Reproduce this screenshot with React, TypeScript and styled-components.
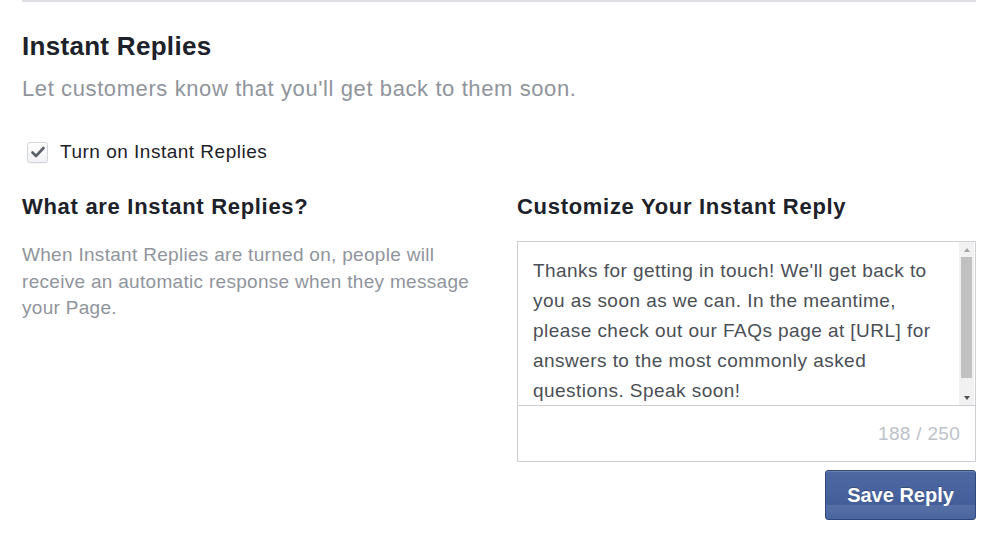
import { FC } from 'react'
import styled, { createGlobalStyle } from 'styled-components'

const GlobalStyle = createGlobalStyle`
	body {
		margin: 0;
		background: #ffffff;
		font-family: 'Liberation Sans', Arial, Helvetica, sans-serif;
	}
`

const Page = styled.div`
	margin: 0 24px 0 22px;
	border-top: 2px solid #dddfe2;
	padding-top: 29px;
`

const Title = styled.h1`
	margin: 0;
	font-size: 26px;
	line-height: 30px;
	letter-spacing: 0.3px;
	font-weight: bold;
	color: #1d2129;
`

const Subtitle = styled.p`
	margin: 13px 0 0;
	font-size: 22px;
	line-height: 30px;
	letter-spacing: 0.6px;
	color: #90949c;
`

const CheckRow = styled.label`
	display: flex;
	align-items: center;
	gap: 12px;
	margin: 36px 0 0 5px;
	font-size: 19px;
	line-height: 24px;
	letter-spacing: 0.5px;
	color: #1d2129;
`

const CheckBox = styled.span`
	display: flex;
	align-items: center;
	justify-content: center;
	width: 19px;
	height: 19px;
	border: 1px solid #d3d6db;
	border-radius: 3px;
	background: linear-gradient(#ffffff, #f1f2f4);
	box-shadow: 0 1px 1px rgba(0, 0, 0, 0.05);
`

const Columns = styled.div`
	display: grid;
	grid-template-columns: 1fr 1fr;
	column-gap: 36px;
	margin-top: 30px;
`

const Column = styled.div`
	display: flex;
	flex-direction: column;
`

const Heading = styled.h2`
	margin: 0;
	font-size: 22px;
	line-height: 26px;
	letter-spacing: 0.7px;
	font-weight: bold;
	color: #1d2129;
`

const Body = styled.p`
	margin: 22px 0 0;
	font-size: 19px;
	line-height: 26.5px;
	letter-spacing: 0.3px;
	color: #90949c;
`

const ReplyBox = styled.div`
	margin-top: 21px;
	border: 1px solid #ccd0d5;
	display: flex;
	flex-direction: column;
`

const TextRow = styled.div`
	display: flex;
	height: 163px;
	border-bottom: 1px solid #ccd0d5;
`

const ReplyText = styled.textarea`
	flex: 1;
	display: block;
	box-sizing: border-box;
	height: 100%;
	margin: 0;
	padding: 14px 5px 0 15px;
	border: 0;
	resize: none;
	outline: none;
	overflow: hidden;
	font-family: 'Liberation Sans', Arial, Helvetica, sans-serif;
	font-size: 19px;
	line-height: 30px;
	letter-spacing: 0.45px;
	color: #4b4f56;
	background: #ffffff;
`

const ScrollBar = styled.div`
	width: 15px;
	margin-right: 1px;
	display: flex;
	flex-direction: column;
	background: #f1f1f1;
`

const ScrollArrow = styled.div<{ $down?: boolean; $color: string }>`
	height: 15px;
	display: flex;
	align-items: center;
	justify-content: center;

	&::before {
		content: '';
		width: 0;
		height: 0;
		border-left: 3.5px solid transparent;
		border-right: 3.5px solid transparent;
		${({ $down, $color }) =>
			$down ? `border-top: 4px solid ${$color};` : `border-bottom: 4px solid ${$color};`}
	}
`

const ScrollTrack = styled.div`
	flex: 1;
	padding: 0 2px;
`

const ScrollThumb = styled.div`
	height: 121px;
	background: #c1c1c1;
`

const Counter = styled.div`
	height: 55px;
	display: flex;
	align-items: center;
	justify-content: flex-end;
	padding-right: 15px;
	font-size: 19px;
	letter-spacing: 0.3px;
	color: #bec2c9;
`

const Actions = styled.div`
	display: flex;
	justify-content: flex-end;
	margin-top: 8px;
`

const SaveButton = styled.button`
	width: 151px;
	height: 50px;
	border: 1px solid #2f477a;
	border-radius: 3px;
	background: linear-gradient(#4e69a2 0%, #435e99 70%, #5670a6 72%, #4a64a0 100%);
	box-shadow: inset 0 1px 0 rgba(255, 255, 255, 0.15);
	color: #ffffff;
	font-family: 'Liberation Sans', Arial, Helvetica, sans-serif;
	font-size: 20px;
	font-weight: bold;
	text-shadow: 0 -1px 0 rgba(0, 0, 0, 0.25);
	cursor: pointer;
`

const CheckMark: FC = () => (
	<svg width="14" height="12" viewBox="0 0 14 12">
		<path d="M1.5 6.5 L5 10 L12.5 2" fill="none" stroke="#5d6169" strokeWidth="2.6" strokeLinecap="round" strokeLinejoin="round" />
	</svg>
)

const replyText =
	"Thanks for getting in touch! We'll get back to you as soon as we can. In the meantime, please check out our FAQs page at [URL] for answers to the most commonly asked questions. Speak soon!"

const App: FC = () => {
	return (
		<>
			<GlobalStyle />
			<Page>
				<Title>Instant Replies</Title>
				<Subtitle>Let customers know that you'll get back to them soon.</Subtitle>
				<CheckRow>
					<CheckBox>
						<CheckMark />
					</CheckBox>
					Turn on Instant Replies
				</CheckRow>
				<Columns>
					<Column>
						<Heading>What are Instant Replies?</Heading>
						<Body>
							When Instant Replies are turned on, people will receive an automatic response when they message your Page.
						</Body>
					</Column>
					<Column>
						<Heading>Customize Your Instant Reply</Heading>
						<ReplyBox>
							<TextRow>
								<ReplyText defaultValue={replyText} spellCheck={false} />
								<ScrollBar>
									<ScrollArrow $color="#a3a3a3" />
									<ScrollTrack>
										<ScrollThumb />
									</ScrollTrack>
									<ScrollArrow $down $color="#505050" />
								</ScrollBar>
							</TextRow>
							<Counter>{replyText.length} / 250</Counter>
						</ReplyBox>
						<Actions>
							<SaveButton type="button">Save Reply</SaveButton>
						</Actions>
					</Column>
				</Columns>
			</Page>
		</>
	)
}

export default App
